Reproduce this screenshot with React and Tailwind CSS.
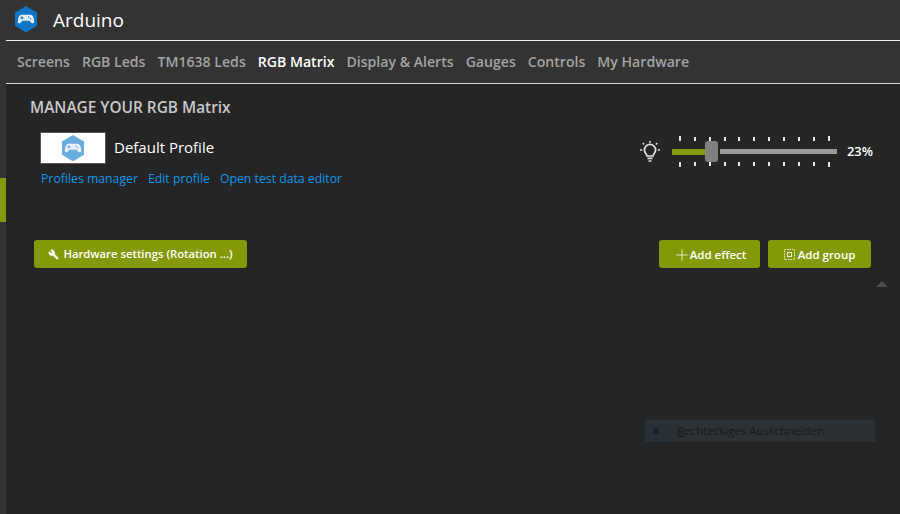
// App.jsx
import { Plus, Wrench } from "lucide-react";

const tabs = ["Screens", "RGB Leds", "TM1638 Leds", "RGB Matrix", "Display & Alerts", "Gauges", "Controls", "My Hardware"];
const ticks = Array.from({ length: 11 });

function GameLogo({ color, size }) {
  return (
    <svg width={size} height={size * 1.2} viewBox="0 0 24 28.8">
      <polygon points="12,0 24,7.2 24,21.6 12,28.8 0,21.6 0,7.2" fill={color} />
      <path
        d="M7.5 9.5h9c2.2 0 3.4 1.6 3.8 3.6l.7 3.7c.3 1.8-2 2.8-3.2 1.4l-1.8-2H8l-1.8 2c-1.2 1.4-3.5.4-3.2-1.4l.7-3.7c.4-2 1.6-3.6 3.8-3.6z"
        fill="#e8f1fa"
      />
      <rect x="7" y="11.2" width="1.2" height="3.6" fill={color} />
      <rect x="5.8" y="12.4" width="3.6" height="1.2" fill={color} />
      <circle cx="15" cy="12" r="0.8" fill={color} />
      <circle cx="17" cy="14" r="0.8" fill={color} />
    </svg>
  );
}

function BulbIcon() {
  return (
    <svg width="20" height="22" viewBox="0 0 20 22" fill="none" stroke="#e0e0e0" strokeWidth="1.7">
      <path d="M7 15c0-1.8-2.6-3-2.6-6a5.6 5.6 0 0 1 11.2 0c0 3-2.6 4.2-2.6 6z" />
      <path d="M7.5 17.3h5M8.5 20h3" />
      <path d="M10 0v1.8M2.8 2.2l1.3 1.3M17.2 2.2l-1.3 1.3M0 9h2.2M17.8 9H20" />
    </svg>
  );
}

function GreenButton({ icon, children, className }) {
  return (
    <button className={`h-[28px] pt-px flex items-center justify-center rounded-[3px] bg-[#849907] text-white font-semibold ${className}`}>
      {icon}
      {children}
    </button>
  );
}

function TickRow({ align }) {
  return (
    <div className={`flex justify-between h-[5px] pl-[7px] pr-[7px] ${align}`}>
      {ticks.map((_, i) => (
        <span key={i} className={`w-[2px] bg-[#e6e6e6] ${i === 0 || i === 10 ? "h-[5px]" : "h-[4px]"}`} />
      ))}
    </div>
  );
}

export default function App() {
  return (
    <div className="flex w-[900px] h-[514px] overflow-hidden bg-[#252525] font-['Open_Sans','Noto_Sans',sans-serif]">
      {/* Left strip */}
      <div className="w-[6px] shrink-0 bg-[#333333] pt-[178px]">
        <div className="h-[44px] bg-[#849907]" />
      </div>

      <div className="flex-1 flex flex-col min-w-0">
        {/* Title bar */}
        <div className="h-[40px] bg-[#333333] flex items-center pl-[9px] gap-[16px]">
          <div className="-mt-[2px]">
            <GameLogo color="#0f75c6" size={22} />
          </div>
          <span className="text-[19px] text-white">Arduino</span>
        </div>
        <div className="h-px bg-[#f0f0f0]" />

        {/* Tabs */}
        <div className="h-[42px] bg-[#333333] flex items-center pl-[11px] pb-px gap-[12px]">
          {tabs.map((t) => (
            <span
              key={t}
              className={`text-[14.1px] font-semibold ${t === "RGB Matrix" ? "text-white" : "text-[#a3a3a3]"}`}
            >
              {t}
            </span>
          ))}
        </div>
        <div className="h-px bg-[#d8d8d8]" />

        {/* Content */}
        <div className="flex-1 flex flex-col pt-[14px] pl-[24px] pr-[25px]">
          <div className="text-[15.4px] font-semibold text-[#c8c8c8] leading-[20px]">MANAGE YOUR RGB Matrix</div>

          <div className="flex justify-between mt-[14px] pl-[10px]">
            <div>
              <div className="flex items-center gap-[8px]">
                <div className="w-[66px] h-[32px] bg-white border border-[#555555] flex items-center justify-center">
                  <GameLogo color="#6aaede" size={22} />
                </div>
                <span className="text-[15px] text-white pb-[2px]">Default Profile</span>
              </div>
              <div className="flex gap-[10px] mt-[6px] pl-px text-[12.25px] text-[#0e97ea] leading-[18px]">
                <span>Profiles manager</span>
                <span>Edit profile</span>
                <span>Open test data editor</span>
              </div>
            </div>

            {/* Brightness slider */}
            <div className="flex items-center mt-[4px] pr-[2px] self-start">
              <div className="mr-[12px] flex">
                <BulbIcon />
              </div>
              <div className="w-[165px] flex flex-col">
                <TickRow align="items-end" />
                <div className="flex items-center h-[21px]">
                  <div className="w-[33px] h-[6px] bg-[#849907]" />
                  <div className="w-[13px] h-[21px] rounded-[3px] bg-[#808080]" />
                  <div className="ml-[2px] flex-1 h-[5px] bg-[#9a9a9a]" />
                </div>
                <TickRow align="items-start" />
              </div>
              <span className="ml-[10px] text-[13px] font-semibold text-white">23%</span>
            </div>
          </div>

          {/* Actions */}
          <div className="flex justify-between mt-[52px] pl-[4px] pr-[4px]">
            <GreenButton className="w-[213px] gap-1 text-[11.3px]" icon={<Wrench size={11} fill="white" strokeWidth={2} className="-scale-x-100" />}>
              Hardware settings (Rotation ...)
            </GreenButton>
            <div className="flex gap-[8px]">
              <GreenButton className="w-[101px] text-[11.5px]" icon={<Plus size={18} strokeWidth={1} className="-mr-px" />}>Add effect</GreenButton>
              <GreenButton
                className="w-[103px] gap-[3px] text-[11.5px]"
                icon={
                  <svg width="11" height="11" viewBox="0 0 11 11" fill="none" stroke="#e8e8c8" strokeWidth="1">
                    <rect x="0.5" y="0.5" width="10" height="10" strokeDasharray="1.5 1" />
                    <rect x="3.5" y="3.5" width="4" height="4" />
                  </svg>
                }
              >
                Add group
              </GreenButton>
            </div>
          </div>

          <div className="self-end mt-[13px] -mr-[13px] w-0 h-0 border-x-[6px] border-x-transparent border-b-[6px] border-b-[#4d4d4d]" />

          {/* Faded context menu item */}
          <div className="self-end mt-[133px] w-[230px] h-[22px] flex items-center bg-[#2b3134] text-[11.5px] text-[#1a1a1a]">
            <div className="w-[22px] h-full bg-[#283038] flex items-center justify-center">
              <span className="w-[6px] h-[6px] rounded-full bg-[#1c2329]" />
            </div>
            <span className="ml-[10px]"><u>R</u>echteckiges Ausschneiden</span>
          </div>
        </div>
      </div>
    </div>
  );
}
